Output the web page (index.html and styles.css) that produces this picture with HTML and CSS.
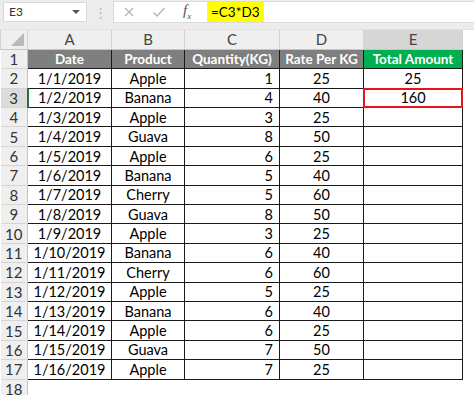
FILE: index.html
```html
<!DOCTYPE html>
<html lang="en">
<head>
    <meta charset="UTF-8">
    <meta name="viewport" content="width=device-width, initial-scale=1.0">
    <title>Total Amount</title>
    <link rel="stylesheet" href="styles.css">
</head>
<body>
    <div class="formula-bar">
        <div class="name-box">
            <span>E3</span>
            <span class="dropdown"></span>
        </div>
        <div class="grip">&#8942;</div>
        <div class="formula-box">
            <div class="fx-buttons">
                <svg width="12" height="12" viewBox="0 0 12 12"><path d="M2 2 L10 10 M10 2 L2 10" stroke="#b5b5b5" stroke-width="1.3" fill="none"/></svg>
                <svg width="14" height="12" viewBox="0 0 14 12"><path d="M1.5 6.5 L5 10 L12.5 2" stroke="#b5b5b5" stroke-width="1.3" fill="none"/></svg>
                <span class="fx">f<sub>x</sub></span>
            </div>
            <div class="formula"><span class="highlight">=C3*D3</span></div>
        </div>
    </div>

    <table class="sheet">
        <colgroup>
            <col class="c-row"><col class="c-a"><col class="c-b"><col class="c-c"><col class="c-d"><col class="c-e"><col>
        </colgroup>
        <tr class="col-heads">
            <th class="corner"><span class="corner-mark"></span></th>
            <th>A</th><th>B</th><th>C</th><th>D</th><th class="selected">E</th><th class="blank"></th>
        </tr>
        <tr class="titles">
            <th class="row-head">1</th>
            <td>Date</td><td>Product</td><td>Quantity(KG)</td><td>Rate Per KG</td><td class="total-head">Total Amount</td><td class="out"></td>
        </tr>
        <tr><th class="row-head">2</th><td>1/1/2019</td><td>Apple</td><td class="num">1</td><td>25</td><td>25</td><td class="out"></td></tr>
        <tr><th class="row-head active">3</th><td>1/2/2019</td><td>Banana</td><td class="num">4</td><td>40</td><td class="current">160</td><td class="out"></td></tr>
        <tr><th class="row-head">4</th><td>1/3/2019</td><td>Apple</td><td class="num">3</td><td>25</td><td></td><td class="out"></td></tr>
        <tr><th class="row-head">5</th><td>1/4/2019</td><td>Guava</td><td class="num">8</td><td>50</td><td></td><td class="out"></td></tr>
        <tr><th class="row-head">6</th><td>1/5/2019</td><td>Apple</td><td class="num">6</td><td>25</td><td></td><td class="out"></td></tr>
        <tr><th class="row-head">7</th><td>1/6/2019</td><td>Banana</td><td class="num">5</td><td>40</td><td></td><td class="out"></td></tr>
        <tr><th class="row-head">8</th><td>1/7/2019</td><td>Cherry</td><td class="num">5</td><td>60</td><td></td><td class="out"></td></tr>
        <tr><th class="row-head">9</th><td>1/8/2019</td><td>Guava</td><td class="num">8</td><td>50</td><td></td><td class="out"></td></tr>
        <tr><th class="row-head">10</th><td>1/9/2019</td><td>Apple</td><td class="num">3</td><td>25</td><td></td><td class="out"></td></tr>
        <tr><th class="row-head">11</th><td>1/10/2019</td><td>Banana</td><td class="num">6</td><td>40</td><td></td><td class="out"></td></tr>
        <tr><th class="row-head">12</th><td>1/11/2019</td><td>Cherry</td><td class="num">6</td><td>60</td><td></td><td class="out"></td></tr>
        <tr><th class="row-head">13</th><td>1/12/2019</td><td>Apple</td><td class="num">5</td><td>25</td><td></td><td class="out"></td></tr>
        <tr><th class="row-head">14</th><td>1/13/2019</td><td>Banana</td><td class="num">6</td><td>40</td><td></td><td class="out"></td></tr>
        <tr><th class="row-head">15</th><td>1/14/2019</td><td>Apple</td><td class="num">6</td><td>25</td><td></td><td class="out"></td></tr>
        <tr><th class="row-head">16</th><td>1/15/2019</td><td>Guava</td><td class="num">7</td><td>50</td><td></td><td class="out"></td></tr>
        <tr><th class="row-head">17</th><td>1/16/2019</td><td>Apple</td><td class="num">7</td><td>25</td><td></td><td class="out"></td></tr>
        <tr class="empty"><th class="row-head">18</th><td></td><td></td><td></td><td></td><td></td><td class="out"></td></tr>
    </table>
</body>
</html>
```

FILE: styles.css
```css
body {
    margin: 0;
    font-family: Lato, "Open Sans", sans-serif;
    background-color: #fff;
    color: #000;
}
.formula-bar {
    display: flex;
    align-items: center;
    height: 30px;
    padding: 0 0 0 3px;
    box-sizing: border-box;
    background-color: #ececec;
    border-bottom: 1px solid #e2e2e2;
}
.name-box {
    display: flex;
    align-items: center;
    justify-content: space-between;
    width: 84px;
    height: 20px;
    margin-top: -6px;
    padding: 0 6px 0 5px;
    box-sizing: border-box;
    background-color: #fff;
    border: 1px solid #dadada;
    font-size: 12px;
    color: #333;
}
.dropdown {
    width: 0;
    height: 0;
    border-left: 4px solid transparent;
    border-right: 4px solid transparent;
    border-top: 4px solid #555;
}
.grip {
    width: 26px;
    margin-top: -6px;
    text-align: center;
    font-size: 13px;
    color: #b8b8b8;
}
.formula-box {
    flex: 1;
    display: flex;
    align-items: center;
    height: 20px;
    margin-top: -6px;
    background-color: #fff;
    border: 1px solid #dadada;
    border-right: none;
}
.fx-buttons {
    display: flex;
    align-items: center;
    gap: 17px;
    width: 93px;
    padding-left: 9px;
    box-sizing: border-box;
}
.fx {
    font-family: "Liberation Serif", serif;
    font-style: italic;
    font-size: 15px;
    color: #555;
}
.fx sub {
    font-size: 9px;
}
.formula {
    display: flex;
    align-items: stretch;
    height: 100%;
    font-size: 13.5px;
}
.highlight {
    display: flex;
    align-items: center;
    padding: 0 4px;
    background-color: #ffff00;
}
.sheet {
    border-collapse: collapse;
    table-layout: fixed;
    width: 474px;
    font-size: 14.5px;
}
.c-row { width: 27px; }
.c-a { width: 84px; }
.c-b { width: 73px; }
.c-c { width: 95px; }
.c-d { width: 84px; }
.c-e { width: 99px; }
.sheet tr {
    height: 19.4px;
}
.sheet td {
    padding: 0;
    text-align: center;
    white-space: nowrap;
    border: 1px solid #1a1a1a;
    line-height: 17px;
}
.sheet td.num {
    text-align: right;
    padding-right: 6px;
}
.sheet td.out {
    border: none;
}
.col-heads {
    height: 20px;
}
.col-heads th {
    font-weight: normal;
    font-size: 15px;
    color: #444;
    background-color: #efefef;
    border-left: 1px solid #d4d4d4;
    border-right: 1px solid #d4d4d4;
    border-bottom: 1px solid #c6c6c6;
    padding: 0;
}
.col-heads th.selected {
    background-color: #d6d6d6;
}
.col-heads th.blank {
    background-color: #fff;
    border: none;
}
.corner {
    position: relative;
}
.corner-mark {
    position: absolute;
    right: 3px;
    bottom: 3px;
    width: 0;
    height: 0;
    border-left: 13px solid transparent;
    border-bottom: 13px solid #b9b9b9;
}
.row-head {
    font-weight: normal;
    font-size: 15px;
    color: #333;
    background-color: #efefef;
    border-bottom: 1px solid #d4d4d4;
    border-right: 1px solid #c6c6c6;
    padding: 0;
    text-align: center;
}
.row-head.active {
    background-color: #dcdcdc;
    border-right: 2px solid #217346;
}
.titles td {
    background-color: #7f7f7f;
    color: #fff;
    font-weight: bold;
    font-size: 13.5px;
}
.titles td.total-head {
    background-color: #00b050;
}
.titles td.out {
    background-color: #fff;
}
.sheet td.current {
    position: relative;
}
.sheet td.current::after {
    content: "";
    position: absolute;
    left: -1px;
    top: -1px;
    right: -1px;
    bottom: -1px;
    border: 2px solid #e8141c;
}
.empty td {
    border: none;
    border-top: 1px solid #1a1a1a;
}
```
